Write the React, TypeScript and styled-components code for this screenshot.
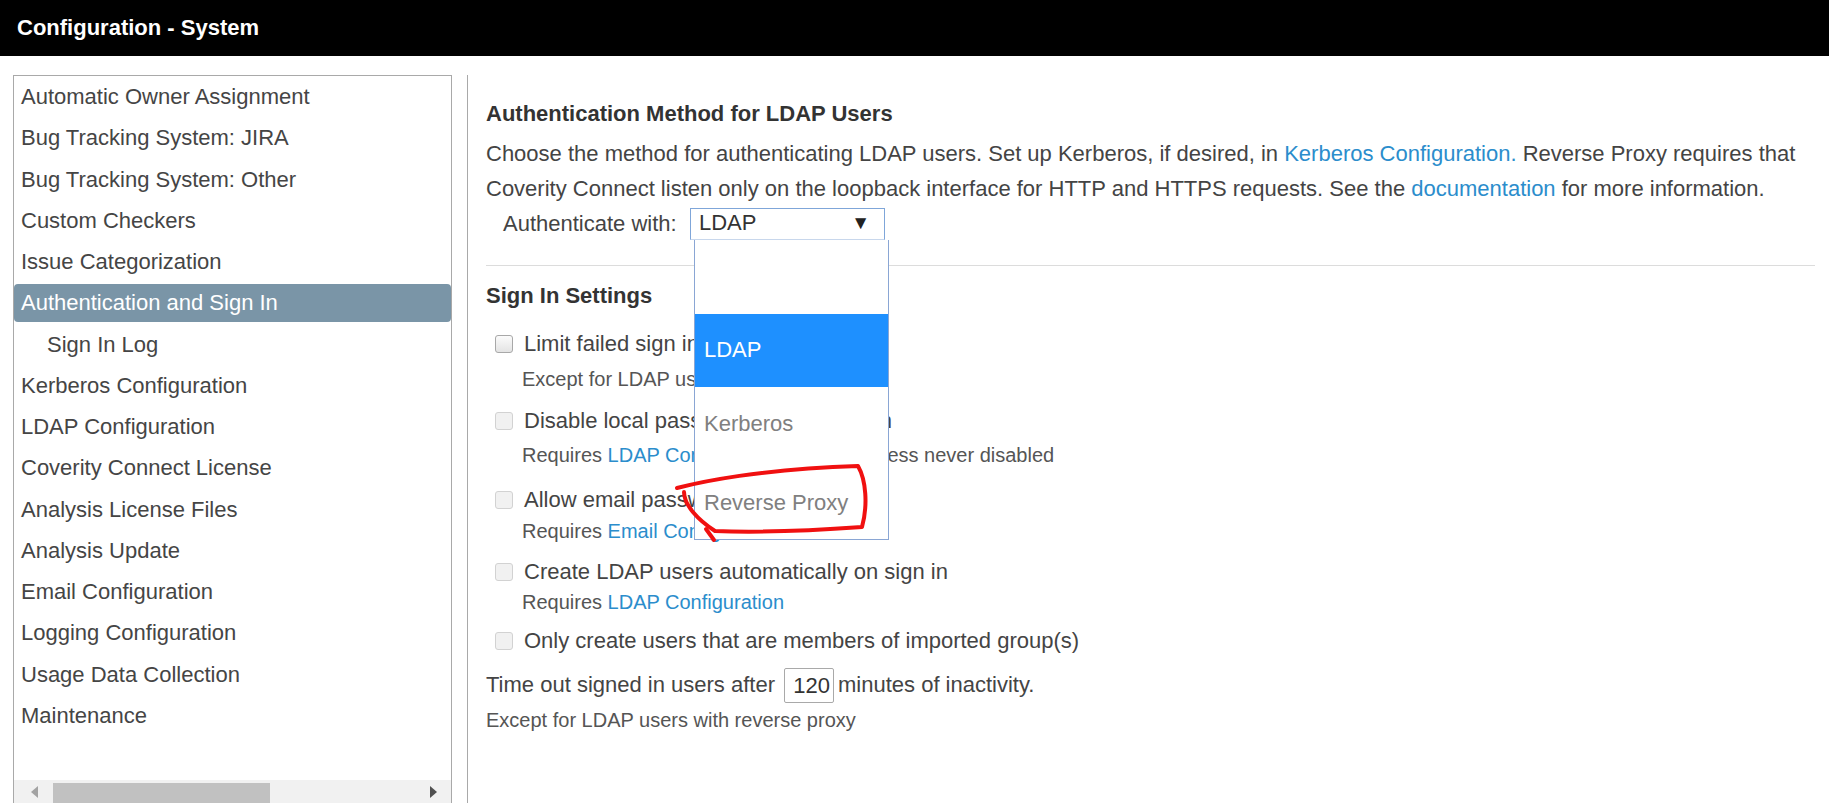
import styled, { createGlobalStyle } from "styled-components";

const GlobalStyle = createGlobalStyle`
  html, body {
    margin: 0;
    padding: 0;
    overflow: hidden;
    background: #fff;
  }
  body {
    font-family: "Liberation Sans", Arial, sans-serif;
    font-size: 22px;
    color: #444;
  }
`;

const navItems = [
  { label: "Automatic Owner Assignment" },
  { label: "Bug Tracking System: JIRA" },
  { label: "Bug Tracking System: Other" },
  { label: "Custom Checkers" },
  { label: "Issue Categorization" },
  { label: "Authentication and Sign In", active: true },
  { label: "Sign In Log", sub: true },
  { label: "Kerberos Configuration" },
  { label: "LDAP Configuration" },
  { label: "Coverity Connect License" },
  { label: "Analysis License Files" },
  { label: "Analysis Update" },
  { label: "Email Configuration" },
  { label: "Logging Configuration" },
  { label: "Usage Data Collection" },
  { label: "Maintenance" },
];

const App = () => {
  return (
    <Page>
      <GlobalStyle />
      <Header>Configuration - System</Header>
      <Body>
        <Sidebar>
          <NavList>
            {navItems.map((item) => (
              <NavItem key={item.label} $active={item.active} $sub={item.sub}>
                {item.label}
              </NavItem>
            ))}
          </NavList>
          <HScroll>
            <ArrowLeft />
            <Thumb />
            <Spacer />
            <ArrowRight />
          </HScroll>
        </Sidebar>

        <Content>
          <Title>Authentication Method for LDAP Users</Title>
          <Description>
            Choose the method for authenticating LDAP users. Set up Kerberos, if desired, in{" "}
            <Link>Kerberos Configuration.</Link> Reverse Proxy requires that
            <br />
            Coverity Connect listen only on the loopback interface for HTTP and HTTPS requests. See
            the <Link>documentation</Link> for more information.
          </Description>

          <AuthRow>
            <AuthLabel>Authenticate with:</AuthLabel>
            <SelectWrap>
              <SelectBox>
                LDAP
                <Caret>▼</Caret>
              </SelectBox>
              <DropList>
                <DropOption />
                <DropOption $selected>LDAP</DropOption>
                <DropOption>Kerberos</DropOption>
                <DropOption $last>Reverse Proxy</DropOption>
              </DropList>
            </SelectWrap>
          </AuthRow>

          <Rule />

          <SectionTitle>Sign In Settings</SectionTitle>

          <Options>
            <Option $gap={0}>
              <CheckLine>
                <Check />
                Limit failed sign in attempts
              </CheckLine>
              <Hint $offset={5}>Except for LDAP users</Hint>
            </Option>
            <Option $gap={12}>
              <CheckLine>
                <Check $disabled />
                Disable local password authentication
              </CheckLine>
              <Hint $offset={4}>
                Requires <Link>LDAP Configuration</Link>. Admin access never disabled
              </Hint>
            </Option>
            <Option $gap={15}>
              <CheckLine>
                <Check $disabled />
                Allow email password reset
              </CheckLine>
              <Hint $offset={1}>
                Requires <Link>Email Configuration</Link>
              </Hint>
            </Option>
            <Option $gap={11}>
              <CheckLine>
                <Check $disabled />
                Create LDAP users automatically on sign in
              </CheckLine>
              <Hint $offset={0}>
                Requires <Link>LDAP Configuration</Link>
              </Hint>
            </Option>
            <Option $gap={9}>
              <CheckLine>
                <Check $disabled />
                Only create users that are members of imported group(s)
              </CheckLine>
            </Option>
          </Options>

          <TimeoutRow>
            Time out signed in users after
            <NumberBox>120</NumberBox>
            minutes of inactivity.
          </TimeoutRow>
          <Note>Except for LDAP users with reverse proxy</Note>
        </Content>
      </Body>

      <Scribble viewBox="0 0 1829 803" width="1829" height="803">
        <path
          d="M 677 488 C 700 482, 760 469, 858 466 C 866 480, 868 505, 862 527 C 820 530, 760 533, 715 531 C 698 520, 684 505, 684 492"
          fill="none"
          stroke="#f01010"
          strokeWidth="4"
          strokeLinecap="round"
          strokeLinejoin="round"
        />
        <path d="M 706 529 L 714 540" stroke="#f01010" strokeWidth="4" strokeLinecap="round" />
      </Scribble>
    </Page>
  );
};

export default App;

const Page = styled.div`
  position: relative;
  width: 1829px;
  height: 803px;
  overflow: hidden;
`;

const Header = styled.div`
  height: 56px;
  background: #000;
  color: #fff;
  font-weight: bold;
  font-size: 22px;
  display: flex;
  align-items: center;
  padding-left: 17px;
`;

const Body = styled.div`
  display: flex;
  align-items: flex-start;
  padding: 19px 14px 0 13px;
  gap: 15px;
`;

const Sidebar = styled.div`
  width: 439px;
  height: 730px;
  box-sizing: border-box;
  border: 1px solid #a9a9a9;
  display: flex;
  flex-direction: column;
  flex-shrink: 0;
`;

const NavList = styled.div`
  flex: 1;
  padding-top: 2px;
`;

const NavItem = styled.div<{ $active?: boolean; $sub?: boolean }>`
  height: 37.25px;
  line-height: 37px;
  margin-bottom: 4px;
  padding-left: ${({ $sub }) => ($sub ? "33px" : "7px")};
  border-radius: 4px;
  white-space: nowrap;
  color: ${({ $active }) => ($active ? "#fff" : "#454545")};
  background: ${({ $active }) => ($active ? "#7a95a7" : "transparent")};
`;

const HScroll = styled.div`
  height: 24px;
  background: #f1f1f1;
  display: flex;
  align-items: center;
  flex-shrink: 0;
`;

const ArrowLeft = styled.div`
  width: 0;
  height: 0;
  margin-left: 17px;
  border-top: 6px solid transparent;
  border-bottom: 6px solid transparent;
  border-right: 7px solid #a3a3a3;
`;

const Thumb = styled.div`
  width: 217px;
  height: 21px;
  align-self: flex-end;
  margin-left: 15px;
  background: #c1c1c1;
`;

const Spacer = styled.div`
  flex: 1;
`;

const ArrowRight = styled.div`
  width: 0;
  height: 0;
  margin-right: 14px;
  border-top: 6px solid transparent;
  border-bottom: 6px solid transparent;
  border-left: 7px solid #505050;
`;

const Content = styled.div`
  flex: 1;
  min-height: 740px;
  border-left: 1px solid #a9a9a9;
  padding: 24px 0 0 18px;
`;

const Title = styled.div`
  font-weight: bold;
  color: #333;
  line-height: 30px;
`;

const Description = styled.div`
  margin-top: 7px;
  line-height: 35px;
  color: #444;
  white-space: nowrap;
`;

const Link = styled.span`
  color: #2b8dcc;
`;

const AuthRow = styled.div`
  margin-top: 2px;
  display: flex;
  align-items: center;
  height: 32px;
  padding-left: 17px;
`;

const AuthLabel = styled.span`
  width: 187px;
  color: #444;
`;

const SelectWrap = styled.div`
  position: relative;
`;

const SelectBox = styled.div`
  width: 195px;
  height: 32px;
  box-sizing: border-box;
  border: 1px solid #7fa6d9;
  border-bottom-color: #c8d7ec;
  padding-left: 8px;
  line-height: 28px;
  color: #333;
  display: flex;
  justify-content: space-between;
`;

const Caret = styled.span`
  font-size: 19px;
  color: #222;
  margin-right: 14px;
`;

const DropList = styled.div`
  position: absolute;
  top: 100%;
  left: 4px;
  width: 193px;
  background: #fff;
  border: 1px solid #8aa6d4;
  border-top: none;
  z-index: 5;
`;

const DropOption = styled.div<{ $selected?: boolean; $last?: boolean }>`
  height: ${({ $last }) => ($last ? "78px" : "73.5px")};
  box-sizing: border-box;
  padding-top: ${({ $last }) => ($last ? "6px" : "0")};
  display: flex;
  align-items: center;
  padding-left: 9px;
  color: ${({ $selected }) => ($selected ? "#fff" : "#808080")};
  background: ${({ $selected }) => ($selected ? "#1e90ff" : "#fff")};
`;

const Rule = styled.div`
  margin-top: 25px;
  height: 1px;
  background: #dcdcdc;
`;

const SectionTitle = styled.div`
  margin-top: 15px;
  font-weight: bold;
  color: #333;
  line-height: 30px;
`;

const Options = styled.div`
  margin-top: 18px;
  display: flex;
  flex-direction: column;
  padding-left: 9px;
`;

const Option = styled.div<{ $gap: number }>`
  display: flex;
  flex-direction: column;
  margin-top: ${({ $gap }) => $gap}px;
`;

const CheckLine = styled.div`
  display: flex;
  align-items: center;
  gap: 11px;
  line-height: 30px;
  color: #444;
  white-space: nowrap;
`;

const Check = styled.span<{ $disabled?: boolean }>`
  width: 18px;
  height: 18px;
  box-sizing: border-box;
  border-radius: 3px;
  border: 1px solid ${({ $disabled }) => ($disabled ? "#d2d2d2" : "#a8a8a8")};
  background: ${({ $disabled }) =>
    $disabled ? "#f1f1f1" : "linear-gradient(#fbfbfb, #e3e3e3)"};
  flex-shrink: 0;
`;

const Hint = styled.div<{ $offset: number }>`
  margin-top: ${({ $offset }) => $offset}px;
  padding-left: 27px;
  font-size: 20px;
  line-height: 30px;
  color: #555;
  white-space: nowrap;
`;

const TimeoutRow = styled.div`
  margin-top: 11px;
  display: flex;
  align-items: center;
  height: 36px;
  color: #444;
  white-space: nowrap;
`;

const NumberBox = styled.span`
  width: 50px;
  height: 35px;
  box-sizing: border-box;
  margin: 0 4px 0 9px;
  border: 1px solid #a9a9a9;
  border-radius: 2px;
  text-align: right;
  padding-right: 3px;
  line-height: 33px;
  color: #333;
`;

const Note = styled.div`
  margin-top: 4px;
  font-size: 20px;
  line-height: 26px;
  color: #555;
`;

const Scribble = styled.svg`
  position: absolute;
  top: 0;
  left: 0;
  pointer-events: none;
  z-index: 10;
`;
